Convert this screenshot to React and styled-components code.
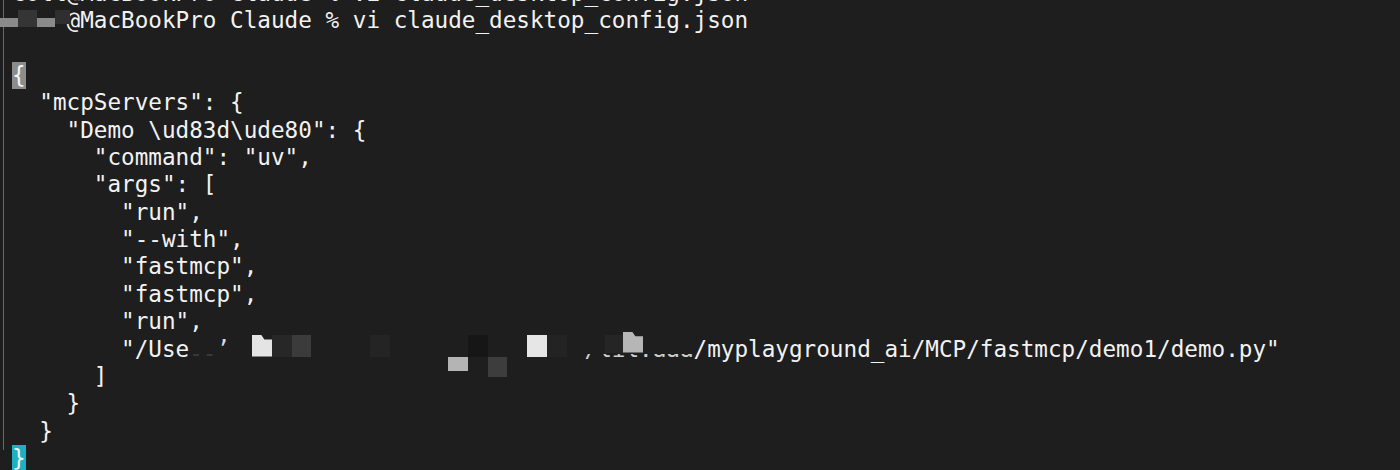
import styled, { createGlobalStyle } from 'styled-components';

const GlobalStyle = createGlobalStyle`
  html, body {
    margin: 0;
    padding: 0;
    background: #1e1e1e;
    overflow: hidden;
  }
`;

const Screen = styled.div`
  width: 1400px;
  height: 470px;
  box-sizing: border-box;
  padding-left: 3px;
  background: #1e1e1e;
  overflow: hidden;
`;

// window edge on the left, the buffer is scrolled so the first row is cut
const Terminal = styled.div`
  height: 100%;
  border-left: 1px solid #686868;
  padding-left: 8px;
  font-family: "DejaVu Sans Mono", "Liberation Mono", monospace;
  font-size: 22.65px;
  color: #f2f2f2;
`;

const Buffer = styled.div`
  margin-top: -20.3px;
`;

const Line = styled.div`
  position: relative;
  height: 27.375px;
  line-height: 27.375px;
  white-space: pre;
`;

const Cursor = styled.span`
  display: inline-block;
  width: 1ch;
  height: 27.375px;
  vertical-align: top;
  background: ${({ $color }) => $color};
  color: #f4f4f4;
`;

const Dim = styled.span`
  color: ${({ $color }) => $color || '#3a3a3a'};
  vertical-align: ${({ $drop }) => ($drop ? `-${$drop}px` : 'baseline')};
`;

// pixelated blur blocks that hide the user name
const Redact = styled.span`
  position: absolute;
  left: ${({ $x }) => $x - 12}px;
  top: ${({ $y }) => $y}px;
  width: ${({ $w }) => $w}px;
  height: ${({ $h }) => $h}px;
  background: ${({ $c }) => $c};
  clip-path: ${({ $fold }) =>
    $fold ? 'polygon(0 0, 45% 0, 62% 22%, 100% 22%, 100% 100%, 0 100%)' : 'none'};
`;

const userBlocks = [
  { x: 0, y: 11, w: 18, h: 9, c: '#8a8a8a' },
  { x: 18, y: 3, w: 19, h: 17, c: '#353535' },
  { x: 37, y: 11, w: 18, h: 9, c: '#8a8a8a' },
  { x: 55, y: 3, w: 15, h: 14, c: '#2f2f2f' },
];

const pathBlocks = [
  { x: 585, y: 0, w: 110, h: 18.5, c: '#1e1e1e' },
  { x: 252, y: -1, w: 20, h: 22, c: '#e4e4e4', fold: true },
  { x: 272, y: -1, w: 20, h: 22, c: '#272727' },
  { x: 292, y: -1, w: 19, h: 22, c: '#3b3b3b' },
  { x: 370, y: -1, w: 20, h: 22, c: '#242424' },
  { x: 468, y: -1, w: 20, h: 22, c: '#161616' },
  { x: 448, y: 21, w: 20, h: 14, c: '#b4b4b4' },
  { x: 488, y: 21, w: 19, h: 20, c: '#3d3d3d' },
  { x: 527, y: -1, w: 20, h: 22, c: '#e6e6e6' },
  { x: 547, y: -1, w: 20, h: 22, c: '#232323' },
  { x: 605, y: -1, w: 18, h: 18, c: '#252525' },
  { x: 623, y: -4, w: 20, h: 21, c: '#b6b6b6', fold: true },
];

const renderBlocks = (blocks) =>
  blocks.map((b, i) => (
    <Redact key={i} $x={b.x} $y={b.y} $w={b.w} $h={b.h} $c={b.c} $fold={b.fold} />
  ));

export default function App() {
  return (
    <>
      <GlobalStyle />
      <Screen>
        <Terminal>
          <Buffer>
            <Line>coll@MacBookPro Claude % vi claude_desktop_config.json</Line>
            <Line>
              {'    @MacBookPro Claude % vi claude_desktop_config.json'}
              {renderBlocks(userBlocks)}
            </Line>
            <Line> </Line>
            <Line>
              <Cursor $color="#8c8c8c">{'{'}</Cursor>
            </Line>
            <Line>{'  "mcpServers": {'}</Line>
            <Line>{'    "Demo \\ud83d\\ude80": {'}</Line>
            <Line>{'      "command": "uv",'}</Line>
            <Line>{'      "args": ['}</Line>
            <Line>{'        "run",'}</Line>
            <Line>{'        "--with",'}</Line>
            <Line>{'        "fastmcp",'}</Line>
            <Line>{'        "fastmcp",'}</Line>
            <Line>{'        "run",'}</Line>
            <Line>
              {'        "/Use'}
              <Dim $drop={4}>--</Dim>
              <Dim $color="#d8d8d8">’</Dim>
              {'                          '}
              <Dim $color="#cfcfcf">/lil.aaa</Dim>
              {'/myplayground_ai/MCP/fastmcp/demo1/demo.py"'}
              {renderBlocks(pathBlocks)}
            </Line>
            <Line>{'      ]'}</Line>
            <Line>{'    }'}</Line>
            <Line>{'  }'}</Line>
            <Line>
              <Cursor $color="#1cb0c0">{'}'}</Cursor>
            </Line>
          </Buffer>
        </Terminal>
      </Screen>
    </>
  );
}
